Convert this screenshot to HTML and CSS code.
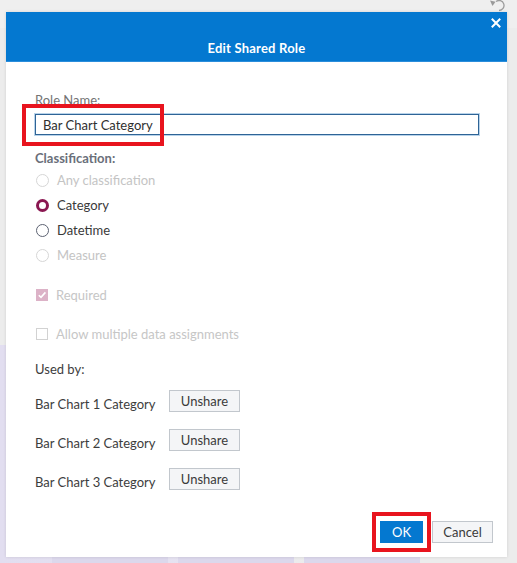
FILE: index.html
```html
<!DOCTYPE html>
<html lang="en">
<head>
<meta charset="utf-8">
<title>Edit Shared Role</title>
<link rel="stylesheet" href="styles.css">
</head>
<body>
<div class="desktop">
  <div class="backdrop-top"></div>
  <div class="backdrop-mid"></div>
  <div class="backdrop-low">
    <div class="tile"></div><div class="tile"></div><div class="tile"></div>
  </div>
  <svg class="undo" width="18" height="12" viewBox="0 0 18 12"><path d="M7 1.5 A5 5 0 1 1 10 10.5" fill="none" stroke="#9c9c9c" stroke-width="1.3"/><path d="M1 0.5 L6.5 1.8 L3.5 6 Z" fill="#9a9a9a"/></svg>
</div>

<div class="dialog">
  <div class="dialog-head">
    <button class="close" aria-label="Close">
      <svg width="10" height="10" viewBox="0 0 10 10"><path d="M1.5 1.5 L8.5 8.5 M8.5 1.5 L1.5 8.5" stroke="#fff" stroke-width="2" stroke-linecap="square"/></svg>
    </button>
    <h1 class="title">Edit Shared Role</h1>
  </div>

  <div class="dialog-body">
    <label class="field-label">Role Name:</label>
    <div class="name-wrap">
      <input class="name-input" type="text" value="Bar Chart Category">
      <span class="mark mark-name"></span>
    </div>

    <div class="group-label">Classification:</div>
    <div class="options">
      <div class="opt disabled"><span class="radio"></span>Any classification</div>
      <div class="opt"><span class="radio on"></span>Category</div>
      <div class="opt"><span class="radio"></span>Datetime</div>
      <div class="opt disabled"><span class="radio"></span>Measure</div>
    </div>

    <div class="check disabled req"><span class="box on"><svg width="10" height="10" viewBox="0 0 10 10"><path d="M1.8 5.2 L4 7.4 L8.4 2.4" fill="none" stroke="#fff" stroke-width="1.6"/></svg></span>Required</div>
    <div class="check disabled multi"><span class="box"></span>Allow multiple data assignments</div>

    <div class="used-label">Used by:</div>
    <div class="used-list">
      <div class="used-row"><span class="used-name">Bar Chart 1 Category</span><button class="btn">Unshare</button></div>
      <div class="used-row"><span class="used-name">Bar Chart 2 Category</span><button class="btn">Unshare</button></div>
      <div class="used-row"><span class="used-name">Bar Chart 3 Category</span><button class="btn">Unshare</button></div>
    </div>
  </div>

  <div class="dialog-foot">
    <div class="ok-wrap">
      <button class="btn primary">OK</button>
      <span class="mark mark-ok"></span>
    </div>
    <button class="btn cancel">Cancel</button>
  </div>
</div>
</body>
</html>
```

FILE: styles.css
```css
html, body {
  margin: 0;
  padding: 0;
}

body {
  width: 517px;
  height: 563px;
  overflow: hidden;
  position: relative;
  background: #ececec;
  font-family: Lato, "Open Sans", sans-serif;
}

/* page behind the modal */
.desktop {
  display: flex;
  flex-direction: column;
  height: 563px;
}
.backdrop-top {
  height: 28px;
  background: #efefef;
}
.backdrop-mid {
  flex: 1;
  background: #ececec;
}
.backdrop-low {
  height: 218px;
  background: linear-gradient(90deg, #e2def0 0, #e6e3f1 40%, #ececec 60%);
  display: flex;
  align-items: flex-end;
  gap: 10px;
  padding-left: 52px;
}
.tile {
  width: 116px;
  height: 6px;
  background: #dcd8ec;
}
.undo {
  position: absolute;
  top: 0;
  left: 489px;
}

/* modal */
.dialog {
  position: absolute;
  left: 6px;
  top: 12px;
  width: 501px;
  height: 545px;
  background: #fff;
  box-shadow: 0 0 3px rgba(0, 0, 0, 0.12);
  display: flex;
  flex-direction: column;
}

.dialog-head {
  position: relative;
  height: 50px;
  background: #0478d0;
  border-bottom: 1px solid #2a8ddb;
  box-sizing: border-box;
  display: flex;
  align-items: flex-end;
  justify-content: center;
}
.title {
  margin: 0 0 5px;
  color: #fff;
  font-size: 13px;
  font-weight: 700;
  letter-spacing: 0.2px;
}
.close {
  position: absolute;
  top: 5px;
  right: 5px;
  width: 12px;
  height: 12px;
  padding: 0;
  border: 0;
  background: transparent;
  display: flex;
  align-items: center;
  justify-content: center;
}

.dialog-body {
  flex: 1;
  padding: 30px 28px 0 29px;
  display: flex;
  flex-direction: column;
  color: #3d3d3d;
  font-size: 13px;
}

.field-label {
  color: #737373;
  font-size: 13px;
  line-height: 16px;
  margin-bottom: 6px;
}

.name-wrap {
  position: relative;
}
.name-input {
  display: block;
  box-sizing: border-box;
  width: 444px;
  height: 21px;
  margin: 0;
  padding: 0 7px;
  border: 1px solid #2f6496;
  box-shadow: 0 0 0 1px #b8d3ea;
  border-radius: 0;
  font-family: inherit;
  font-size: 13px;
  color: #2f2f2f;
  background: #fff;
  outline: none;
}

/* red callout frames */
.mark {
  position: absolute;
  border: 4px solid #e8141e;
  pointer-events: none;
}
.mark-name {
  left: -13px;
  top: -10px;
  width: 134px;
  height: 34px;
}
.mark-ok {
  left: -8px;
  top: -9px;
  width: 51px;
  height: 32px;
}

.group-label {
  margin-top: 15px;
  color: #6a6f7a;
  font-weight: 700;
  font-size: 13px;
  line-height: 16px;
}

.options {
  display: flex;
  flex-direction: column;
  gap: 9px;
  margin-top: 6px;
}
.opt {
  display: flex;
  align-items: center;
  gap: 8px;
  height: 16px;
  color: #3a3a3a;
}
.radio {
  box-sizing: border-box;
  width: 13px;
  height: 13px;
  border-radius: 50%;
  border: 1.5px solid #5c6272;
  margin-left: 1px;
}
.radio.on {
  border: 3.5px solid #8a1751;
}
.opt.disabled {
  color: #c4c4c4;
}
.opt.disabled .radio {
  border: 1px solid #d6d6d6;
}

.check {
  display: flex;
  align-items: center;
  gap: 8px;
  height: 16px;
}
.check.disabled {
  color: #c6c6c6;
}
.box {
  box-sizing: border-box;
  width: 12px;
  height: 12px;
  border: 1px solid #d2d2d2;
  margin-left: 1px;
  display: flex;
  align-items: center;
  justify-content: center;
}
.box.on {
  background: #dcb2c7;
  border-color: #dcb2c7;
}
.req {
  margin-top: 24px;
}
.multi {
  margin-top: 23px;
}

.used-label {
  margin-top: 19px;
  color: #3d3d3d;
  line-height: 16px;
}
.used-list {
  display: flex;
  flex-direction: column;
  gap: 17px;
  margin-top: 13px;
}
.used-row {
  display: flex;
  align-items: center;
  height: 22px;
}
.used-name {
  width: 134px;
  color: #3d3d3d;
  padding-top: 5px;
}

.btn {
  box-sizing: border-box;
  height: 22px;
  padding: 0 10px;
  border: 1px solid #c2c7cd;
  background: #f4f5f7;
  color: #3a3a3a;
  font-family: inherit;
  font-size: 13px;
  line-height: 18px;
}
.used-row .btn {
  width: 71px;
}

.dialog-foot {
  height: 36px;
  display: flex;
  justify-content: flex-end;
  align-items: flex-start;
  gap: 9px;
  padding-right: 14px;
}
.ok-wrap {
  position: relative;
}
.btn.primary {
  width: 43px;
  background: #0478d0;
  border-color: #0478d0;
  color: #fff;
}
.btn.cancel {
  width: 61px;
}
```
